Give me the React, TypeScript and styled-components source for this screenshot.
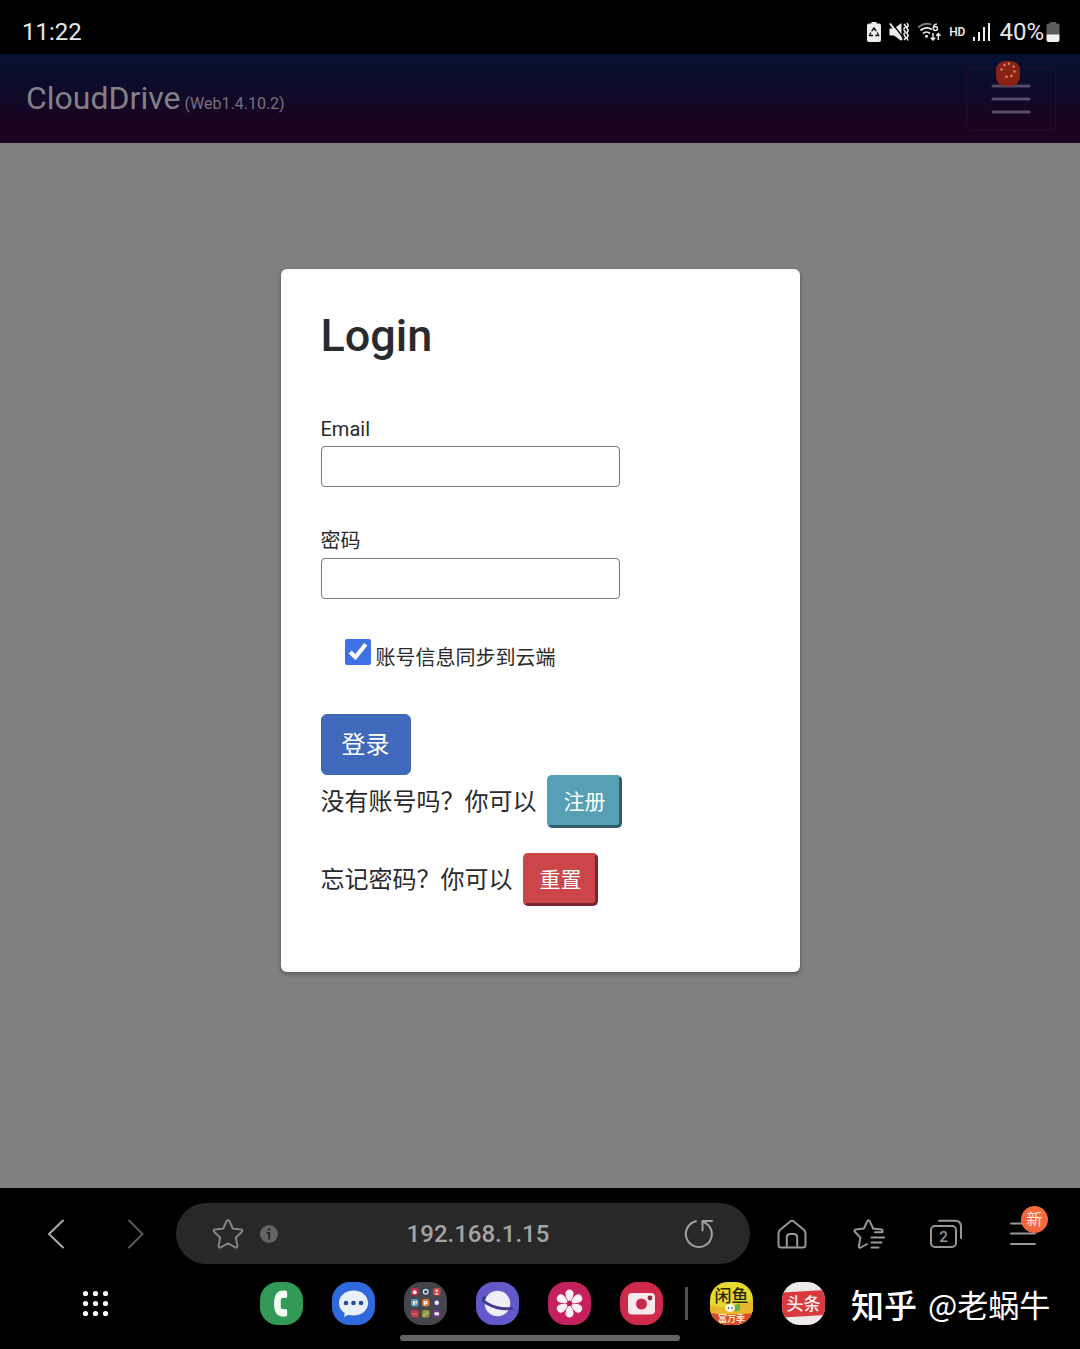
import React from "react";
import styled, { createGlobalStyle } from "styled-components";

const GlobalStyle = createGlobalStyle`
  *, *::before, *::after { box-sizing: border-box; }
  body {
    margin: 0;
    background: #000;
    font-family: Roboto, "Noto Sans CJK SC", sans-serif;
    color: #292a2c;
  }
  button, input { font-family: inherit; margin: 0; }
  svg { display: block; }
`;

const Screen = styled.div`
  display: flex;
  flex-direction: column;
  min-height: 100vh;
`;

/* ---------- System status bar ---------- */

const StatusBar = styled.div`
  display: flex;
  align-items: center;
  justify-content: space-between;
  height: 54px;
  padding: 10px 20px 0 22px;
  background: #000;
  color: #e8e8e8;
  font-size: 24px;
  line-height: 28px;
`;

const StatusIcons = styled.div`
  display: flex;
  align-items: center;
  gap: 8px;
`;

const HdMark = styled.span`
  font-size: 12px;
  font-weight: 600;
  line-height: 16px;
`;

const BatteryLevel = styled.span`
  display: flex;
  align-items: center;
  gap: 2px;
`;

/* ---------- Site header ---------- */

const Header = styled.header`
  display: flex;
  align-items: center;
  justify-content: space-between;
  height: 89px;
  padding: 0 24px 0 26px;
  background: linear-gradient(180deg, #06112f 0%, #0a0c2c 30%, #1a0420 75%);
`;

const Brand = styled.a`
  display: flex;
  align-items: baseline;
  gap: 4px;
  padding-top: 4px;
  color: #828087;
  font-size: 32px;
  line-height: 40px;
  text-decoration: none;
`;

const Version = styled.small`
  font-size: 16px;
  color: #77717e;
`;

const Toggler = styled.button`
  position: relative;
  display: flex;
  align-items: center;
  justify-content: center;
  width: 90px;
  height: 64px;
  padding: 0;
  border: 1px solid #210f2c;
  border-radius: 5px;
  background: transparent;
`;

const TogglerBadge = styled.span`
  position: absolute;
  top: -7px;
  left: 29px;
`;

/* ---------- Login card ---------- */

const Main = styled.main`
  flex: 1;
  padding: 126px 20px 40px;
  background: #808080;
`;

const Card = styled.form`
  display: flex;
  flex-direction: column;
  width: 100%;
  max-width: 519px;
  margin: 0 auto;
  padding: 40px 40px 66px;
  border-radius: 6px;
  background: #fff;
  box-shadow: 0 2px 4px rgba(0, 0, 0, 0.35);
`;

const Title = styled.h1`
  margin: 0 0 51px;
  font-size: 45px;
  font-weight: 500;
  line-height: 54px;
`;

const Field = styled.div`
  display: flex;
  flex-direction: column;
  gap: 2px;
  margin-bottom: 39px;
`;

const FieldLabel = styled.label`
  font-size: 20px;
  line-height: 30px;
`;

const TextInput = styled.input`
  width: 299px;
  max-width: 100%;
  height: 41px;
  padding: 2px 8px;
  border: 1px solid #76767a;
  border-radius: 4px;
  background: #fff;
  font-size: 20px;
`;

const CheckRow = styled.div`
  display: flex;
  align-items: flex-start;
  gap: 5px;
  margin-bottom: 37px;
  padding: 1px 0 0 24px;
`;

const Checkbox = styled.input`
  width: 26px;
  height: 26px;
  accent-color: #3f70e4;
`;

const CheckLabel = styled.label`
  font-size: 20px;
  line-height: 38px;
`;

const SubmitButton = styled.button`
  align-self: flex-start;
  height: 61px;
  padding: 0 20px 4px;
  border: 1px solid #3c66b4;
  border-radius: 6px;
  background: #4169bb;
  color: #fff;
  font-size: 24px;
`;

const Hint = styled.div`
  display: flex;
  flex-wrap: wrap;
  align-items: center;
  gap: 10px;
  font-size: 24px;
  line-height: 36px;

  & + & { margin-top: 25px; }
`;

const SmallButton = styled.button<{ $fill: string; $edge: string }>`
  height: 53px;
  padding: 0 13px 3px 14px;
  border: 3px solid;
  border-color: ${(p) => `${p.$fill} ${p.$edge} ${p.$edge} ${p.$fill}`};
  border-radius: 5px;
  background: ${(p) => p.$fill};
  color: #fff;
  font-size: 21px;
`;

/* ---------- Browser toolbar and dock ---------- */

const Bottom = styled.footer`
  display: flex;
  flex-direction: column;
  padding: 15px 0 8px;
  background: #000;
`;

const Toolbar = styled.nav`
  display: flex;
  align-items: center;
  padding: 0 19px 0 16px;
`;

const ToolButton = styled.button<{ $width: number }>`
  position: relative;
  display: flex;
  align-items: center;
  justify-content: center;
  flex: none;
  width: ${(p) => p.$width}px;
  height: 61px;
  padding: 0;
  border: 0;
  background: transparent;
`;

const AddressBar = styled.div`
  display: flex;
  align-items: center;
  flex: 1;
  min-width: 0;
  height: 61px;
  margin-right: 3px;
  padding: 0 36px;
  border-radius: 31px;
  background: #282828;
`;

const BarButton = styled.button`
  display: flex;
  flex: none;
  padding: 0;
  border: 0;
  background: transparent;
`;

const SiteButtons = styled.div`
  display: flex;
  align-items: center;
  flex: none;
  gap: 16px;
`;

const Address = styled.input`
  flex: 1;
  min-width: 0;
  margin: 0 20px 0 14px;
  padding: 0;
  border: 0;
  background: transparent;
  color: #a3a3a3;
  font-size: 24px;
  font-weight: 500;
  line-height: 32px;
  text-align: center;
`;

const NewBadge = styled.span`
  position: absolute;
  top: 3px;
  left: 37px;
  width: 27px;
  height: 27px;
  border-radius: 50%;
  background: #f2683f;
  color: #ffe6da;
  font-size: 16px;
  line-height: 27px;
  text-align: center;
`;

const Dock = styled.div`
  display: flex;
  align-items: center;
  gap: 22px;
  margin-top: 18px;
  padding: 0 28px 0 74px;
`;

const DockGroup = styled.div`
  display: flex;
  gap: 29px;
`;

const AllApps = styled.div`
  margin-right: 121px;
`;

const AppButton = styled.button<{ $fill: string }>`
  display: flex;
  align-items: center;
  justify-content: center;
  width: 43px;
  height: 43px;
  padding: 0;
  overflow: hidden;
  border: 0;
  border-radius: 18px;
  background: ${(p) => p.$fill};
`;

const Divider = styled.span`
  width: 3px;
  height: 33px;
  background: #4e4e4e;
`;

const Signature = styled.div`
  display: flex;
  align-items: center;
  flex: none;
  gap: 11px;
  margin-left: 4px;
  color: #fff;
  font-family: "Noto Sans CJK SC", sans-serif;
  font-size: 31px;
  line-height: 40px;
  white-space: nowrap;
`;

const SignatureSite = styled.span`
  font-size: 33px;
  font-weight: 500;
`;

const Handle = styled.div`
  align-self: center;
  width: 280px;
  height: 6px;
  margin-top: 10px;
  border-radius: 3px;
  background: #646464;
`;

/* ---------- Drawings ---------- */

const RecycleBattery = () => (
  <svg width="14" height="20" viewBox="0 0 14 20">
    <path d="M4.500 0h5v1.500H12a2 2 0 0 1 2 2V18a2 2 0 0 1-2 2H2a2 2 0 0 1-2-2V3.500a2 2 0 0 1 2-2h2.500z" fill="#ededed" />
    <g fill="none" stroke="#111" strokeWidth="1.300">
      <path d="M4.600 9.300 7 5.800l2.200 3.300M10.200 10.400l1.400 3.100H8.300M6 13.500H2.500l1.300-3.100" />
    </g>
  </svg>
);

const MutedSpeaker = () => (
  <svg width="20" height="20" viewBox="0 0 20 20">
    <path d="M0.500 6.500h4.500L12.500 1v18L5 13.500H0.500z" fill="#ededed" />
    <path d="M2.800 1.200 13.500 14.500" stroke="#000" strokeWidth="1.300" />
    <path d="M1 1.500 13 17.500" stroke="#ededed" strokeWidth="2" />
    <path d="M14.500 7l2.500-2.500L15 2M14.500 12.500l2-2.500-2-2.500M15 18l2-2.500-2-2.500M18 1l1.300 2.500L17.800 6l1.500 2.500-1.500 2.500 1.500 2.500-1.500 2.500 1.200 2.500" fill="none" stroke="#ededed" strokeWidth="1.500" />
  </svg>
);

const Wifi = () => (
  <svg width="24" height="20" viewBox="0 0 24 20">
    <path d="M1 5.500C5 2 10 1 14.500 2.500" fill="none" stroke="#777" strokeWidth="1.800" />
    <g fill="none" stroke="#ededed" strokeWidth="1.800">
      <path d="M3.500 8.500c3.500-3 8-3.200 11.500-1" />
      <path d="M6 11.500c2-1.800 5-1.800 7 0" />
      <path d="M20 2.200c-2.500-.6-3.800 1.800-3.600 4" strokeWidth="1.400" />
      <circle cx="18.400" cy="6.500" r="2" strokeWidth="1.400" />
      <path d="M16 11v7m-2.200-2.200L16 18l2.200-2.200M21.300 18v-6.500m-2.200 2.200 2.200-2.200 2.200 2.200" strokeWidth="1.500" />
    </g>
    <circle cx="9.500" cy="14.300" r="1.500" fill="#ededed" />
  </svg>
);

const Signal = () => (
  <svg width="18" height="20" viewBox="0 0 18 20" fill="#ededed">
    <rect x="0" y="15" width="2" height="4" />
    <rect x="5" y="10" width="2" height="9" />
    <rect x="10" y="5" width="2" height="14" />
    <rect x="15" y="1" width="2" height="18" />
  </svg>
);

const Battery = () => (
  <svg width="14" height="20" viewBox="0 0 14 20">
    <path d="M4 0h6v1.500h2a1.500 1.500 0 0 1 1.500 1.500v10H0.500V3A1.500 1.500 0 0 1 2 1.500h2z" fill="#5c5c5c" />
    <path d="M0.500 12.500h13V18a2 2 0 0 1-2 2h-9a2 2 0 0 1-2-2z" fill="#f2f2f2" />
  </svg>
);

const HamburgerLines = () => (
  <svg width="40" height="30" viewBox="0 0 40 30" stroke="#574b66" strokeWidth="3" strokeLinecap="round">
    <path d="M2 2h36M2 15h36M2 28h36" />
  </svg>
);

const RedSpinner = () => (
  <svg width="24" height="25" viewBox="0 0 24 25">
    <rect width="24" height="25" rx="9" fill="#8a2114" />
    <g fill="#c98a74">
      <circle cx="5.500" cy="8.500" r="1.200" />
      <circle cx="8.500" cy="4" r="1.200" />
      <circle cx="13" cy="2.800" r="1.200" />
      <circle cx="17.500" cy="5.500" r="1.200" />
      <circle cx="18.500" cy="10.500" r="1.200" />
    </g>
    <g fill="#cf8040">
      <circle cx="10.500" cy="15.800" r="1.400" />
      <circle cx="15.500" cy="15" r="1.400" />
    </g>
  </svg>
);

const Chevron = ({ forward = false }: { forward?: boolean }) => (
  <svg width="18" height="30" viewBox="0 0 18 30" fill="none" strokeWidth="2" strokeLinecap="round" stroke={forward ? "#5a5a5a" : "#aaaaaa"}>
    <path d={forward ? "M2 1.500 15.500 15 2 28.500" : "M16 1.500 2 15l14 13.500"} />
  </svg>
);

const Star = () => (
  <svg width="32" height="32" viewBox="0 0 32 32" fill="none" stroke="#858585" strokeWidth="2" strokeLinejoin="round">
    <path d="M16 2c.8 0 1.200.6 1.500 1.200l3.200 7.300 8.300 1c1.300.2 1.800 1.500.8 2.400l-6 5.600 1.600 8.400c.2 1.400-1 2.200-2.200 1.500L16 25.300l-7.200 4.100c-1.200.7-2.400-.1-2.200-1.500l1.600-8.400-6-5.600c-1-.9-.5-2.200.8-2.400l8.300-1 3.200-7.300c.3-.6.7-1.200 1.500-1.200z" />
  </svg>
);

const Info = () => (
  <svg width="18" height="18" viewBox="0 0 18 18">
    <circle cx="9" cy="9" r="9" fill="#646464" />
    <circle cx="9" cy="4.500" r="1.300" fill="#282828" />
    <path d="M6.500 7.800h2.700v6.700" fill="none" stroke="#282828" strokeWidth="1.800" />
  </svg>
);

const Reload = () => (
  <svg width="30" height="30" viewBox="0 0 30 30" fill="none" stroke="#a0a0a0" strokeWidth="2" strokeLinecap="round" strokeLinejoin="round">
    <path d="M12 2.300A13 13 0 1 0 24.500 6.300M28 2H18.500V11.500M18.500 2l6 4.300" />
  </svg>
);

const Home = () => (
  <svg width="30" height="30" viewBox="0 0 30 30" fill="none" stroke="#979797" strokeWidth="2" strokeLinejoin="round">
    <path d="M3.500 10.500 13.500 2.200q1.500-1 3 0L26.500 10.500q2 1.700 2 4V26q0 2.500-2.500 2.500H4Q1.500 28.500 1.500 26V14.500q0-2.300 2-4z" />
    <path d="M9.800 28.500V18.500q0-3.500 3.200-3.500h4q3.200 0 3.200 3.500v10" />
  </svg>
);

const Bookmarks = () => (
  <svg width="32" height="32" viewBox="0 0 32 32" fill="none" stroke="#979797" strokeWidth="2" strokeLinejoin="round" strokeLinecap="round">
    <path d="M14 26 7.800 29.500c-1.200.6-2.300-.1-2-1.500l1.700-8.400L2 14c-1-1-.4-2.200.8-2.400l8-1 3.400-7.300c.6-1.500 2-1.500 2.600 0l3.400 7.300 8 1c1.300.2 1.900 1.200 1.200 2.600" />
    <path d="M22 14.200h7M18.500 19.500h13M18.500 24.500h10M18.500 29.500h7" />
  </svg>
);

const Tabs = () => (
  <svg width="32" height="30" viewBox="0 0 32 30" fill="none" stroke="#979797" strokeWidth="2">
    <rect x="1" y="7" width="25" height="21" rx="4" />
    <path d="M9 1.800h16Q31 1.800 31 8v11" strokeLinecap="round" />
    <text x="13.500" y="23" textAnchor="middle" fontSize="15" fontWeight="500" fill="#979797" stroke="none">2</text>
  </svg>
);

const MenuLines = () => (
  <svg width="26" height="24" viewBox="0 0 26 24" stroke="#979797" strokeWidth="2" strokeLinecap="round">
    <path d="M1 1.500h24M1 11.500h24M1 22h24" />
  </svg>
);

const DotGrid = () => (
  <svg width="27" height="27" viewBox="0 0 27 27" fill="#fff">
    {[3, 13, 23].flatMap((y) => [3, 13, 23].map((x) => <circle key={`${x}-${y}`} cx={x + 0.5} cy={y + 0.5} r="2.600" />))}
  </svg>
);

const Phone = () => (
  <svg width="43" height="43" viewBox="0 0 43 43">
    <path d="M25 8.500c1.500 0 2.200.7 2.200 2v3.600c0 1.400-.8 2-2.200 2h-2.200c-1.700 0-2 1-2 2v6.800c0 1.300.5 2 2 2H25c1.400 0 2.200.8 2.200 2v3.500c0 1.400-.8 2.200-2.200 2.200h-1.500C17 34.600 14 30 14 21.500S17 8.500 23.500 8.500z" fill="#f2fbf4" />
  </svg>
);

const Messages = () => (
  <svg width="43" height="43" viewBox="0 0 43 43">
    <path d="M21.500 8.500C30 8.500 36 14 36 21s-6 12.500-14.500 12.500c-2 0-3.500-.2-5-.8L12 35c.6-1.300.7-2.600.5-4C9 28.700 7 25 7 21 7 14 13 8.500 21.500 8.500z" fill="#e9f0fc" />
    <g fill="#294a95">
      <circle cx="14" cy="21" r="2.300" />
      <circle cx="21.500" cy="21" r="2.300" />
      <circle cx="29" cy="21" r="2.300" />
    </g>
  </svg>
);

const folderFills = ["#c62f4c", "#303b50", "#d14b40", "#4ba3bd", "#dc7b3c", "#4a4279", "#c93844", "#a08a4a", "#6b3594"];

const Folder = () => (
  <svg width="43" height="43" viewBox="0 0 43 43">
    {folderFills.map((fill, i) => (
      <rect key={i} x={7 + (i % 3) * 11} y={6 + Math.floor(i / 3) * 11} width="7.500" height="7.500" rx="2" fill={fill} />
    ))}
    <g fill="#f4e9e8">
      <circle cx="10.700" cy="10.300" r="2" />
      <circle cx="32.700" cy="8.800" r="1.200" />
      <path d="M30.500 12.500q2.200-3 4.400 0z" />
      <rect x="9" y="19" width="2" height="4" />
      <rect x="11.700" y="19" width="1.300" height="2.500" />
      <circle cx="32.700" cy="20.700" r="2.200" />
      <rect x="30.500" y="30.300" width="4.500" height="3" />
    </g>
    <circle cx="21.700" cy="9.800" r="2.300" fill="none" stroke="#c3deed" strokeWidth="1.500" />
    <path d="M20.500 23.500v-4h1.700q1.500 1.200 0 2.300h-1.700" fill="none" stroke="#fff" strokeWidth="1.200" />
    <path d="M19 34.500l5.500-5" stroke="#8fc25d" strokeWidth="2" />
    <path d="M8.500 32h4.500" stroke="#e78178" strokeWidth="1" />
  </svg>
);

const Planet = () => (
  <svg width="43" height="43" viewBox="0 0 43 43">
    <circle cx="21.500" cy="21.500" r="12.800" fill="#efedf5" />
    <path d="M8.500 15.500C6 17.500 7.500 19.500 11 21.500c7 4 17 6 24.500 5" fill="none" stroke="#453a91" strokeWidth="3" strokeLinecap="round" />
  </svg>
);

const Flower = () => (
  <svg width="43" height="43" viewBox="0 0 43 43">
    {[0, 60, 120, 180, 240, 300].map((a) => (
      <path key={a} d="M21.500 19.500C17.500 15 16 8 21.500 8s4 7 0 11.500z" transform={`rotate(${a} 21.500 21.500)`} fill="#fff0f6" stroke="#fff0f6" strokeWidth="1" />
    ))}
    <circle cx="21.500" cy="21.500" r="2.800" fill="#b71e59" />
  </svg>
);

const Camera = () => (
  <svg width="43" height="43" viewBox="0 0 43 43">
    <rect x="8" y="11" width="27" height="21.500" rx="4" fill="#fae9ea" />
    <circle cx="21.500" cy="22" r="5.500" fill="#c42a4a" />
    <circle cx="30" cy="16" r="2.400" fill="#8e2e42" />
  </svg>
);

const Marketplace = () => (
  <svg width="43" height="43" viewBox="0 0 43 43">
    <path d="M0 23Q14 29 43 18V43H0z" fill="#eab62e" />
    <path d="M0 31Q20 34 43 31V43H0z" fill="#d9492c" />
    <ellipse cx="20" cy="26" rx="5" ry="4" fill="#f4f6df" />
    <path d="M25 23l5-2v7l-5 2z" fill="#63b54b" />
    <circle cx="18.500" cy="26" r="0.800" fill="#333" />
    <circle cx="22" cy="26" r="0.800" fill="#333" />
    <text x="21.500" y="20" textAnchor="middle" fontSize="17" fontWeight="500" fill="#2b2811">闲鱼</text>
    <text x="21.500" y="40" textAnchor="middle" fontSize="9" fontWeight="700" fill="#fbe5c5">富万季</text>
  </svg>
);

const Headlines = () => (
  <svg width="43" height="43" viewBox="0 0 43 43">
    <path d="M0 10.500 43 8v25L0 35.500z" fill="#d93a40" />
    <text x="21.500" y="27.500" textAnchor="middle" fontSize="17" fontWeight="500" fill="#fff1ee">头条</text>
  </svg>
);

const mainApps = [
  { name: "Phone", fill: "#329a57", Icon: Phone },
  { name: "Messages", fill: "#2f69dc", Icon: Messages },
  { name: "Folder", fill: "#45454b", Icon: Folder },
  { name: "Internet", fill: "#6459cb", Icon: Planet },
  { name: "Gallery", fill: "#c4215f", Icon: Flower },
  { name: "Camera", fill: "#cf2a4c", Icon: Camera },
];

const recentApps = [
  { name: "闲鱼", fill: "#e5d92f", Icon: Marketplace },
  { name: "头条", fill: "#eeeaea", Icon: Headlines },
];

export default function App() {
  return (
    <Screen>
      <GlobalStyle />
      <StatusBar>
        <span>11:22</span>
        <StatusIcons>
          <RecycleBattery />
          <MutedSpeaker />
          <Wifi />
          <HdMark>HD</HdMark>
          <Signal />
          <BatteryLevel>
            40%
            <Battery />
          </BatteryLevel>
        </StatusIcons>
      </StatusBar>

      <Header>
        <Brand href="#">
          CloudDrive
          <Version>(Web1.4.10.2)</Version>
        </Brand>
        <Toggler type="button" aria-label="Menu">
          <HamburgerLines />
          <TogglerBadge>
            <RedSpinner />
          </TogglerBadge>
        </Toggler>
      </Header>

      <Main>
        <Card onSubmit={(e) => e.preventDefault()}>
          <Title>Login</Title>
          <Field>
            <FieldLabel htmlFor="email">Email</FieldLabel>
            <TextInput id="email" type="email" />
          </Field>
          <Field>
            <FieldLabel htmlFor="password">密码</FieldLabel>
            <TextInput id="password" type="password" />
          </Field>
          <CheckRow>
            <Checkbox id="sync" type="checkbox" defaultChecked />
            <CheckLabel htmlFor="sync">账号信息同步到云端</CheckLabel>
          </CheckRow>
          <SubmitButton type="submit">登录</SubmitButton>
          <Hint>
            <span>没有账号吗？你可以</span>
            <SmallButton type="button" $fill="#569fb4" $edge="#2f5f6c">注册</SmallButton>
          </Hint>
          <Hint>
            <span>忘记密码？你可以</span>
            <SmallButton type="button" $fill="#cb4549" $edge="#75292d">重置</SmallButton>
          </Hint>
        </Card>
      </Main>

      <Bottom>
        <Toolbar>
          <ToolButton $width={80} type="button" aria-label="Back"><Chevron /></ToolButton>
          <ToolButton $width={80} type="button" aria-label="Forward"><Chevron forward /></ToolButton>
          <AddressBar>
            <SiteButtons>
              <BarButton type="button" aria-label="Add bookmark"><Star /></BarButton>
              <BarButton type="button" aria-label="Site information"><Info /></BarButton>
            </SiteButtons>
            <Address aria-label="Address" defaultValue="192.168.1.15" />
            <BarButton type="button" aria-label="Reload"><Reload /></BarButton>
          </AddressBar>
          <ToolButton $width={77} type="button" aria-label="Home"><Home /></ToolButton>
          <ToolButton $width={77} type="button" aria-label="Bookmarks"><Bookmarks /></ToolButton>
          <ToolButton $width={77} type="button" aria-label="Tabs"><Tabs /></ToolButton>
          <ToolButton $width={77} type="button" aria-label="More">
            <MenuLines />
            <NewBadge>新</NewBadge>
          </ToolButton>
        </Toolbar>
        <Dock>
          <AllApps>
            <AppButton $fill="transparent" type="button" aria-label="All apps"><DotGrid /></AppButton>
          </AllApps>
          <DockGroup>
            {mainApps.map(({ name, fill, Icon }) => (
              <AppButton key={name} $fill={fill} type="button" aria-label={name}><Icon /></AppButton>
            ))}
          </DockGroup>
          <Divider />
          <DockGroup>
            {recentApps.map(({ name, fill, Icon }) => (
              <AppButton key={name} $fill={fill} type="button" aria-label={name}><Icon /></AppButton>
            ))}
          </DockGroup>
          <Signature>
            <SignatureSite>知乎</SignatureSite>
            <span>@老蜗牛</span>
          </Signature>
        </Dock>
        <Handle />
      </Bottom>
    </Screen>
  );
}
